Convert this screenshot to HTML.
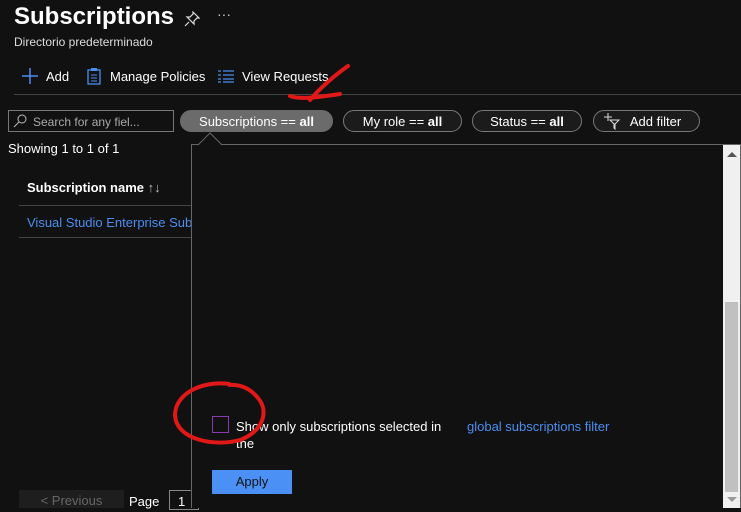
<!DOCTYPE html>
<html><head><style>
body{margin:0;width:741px;height:508px;background:#111;overflow:hidden;position:relative;font-family:"Liberation Sans",sans-serif;color:#fff}
.a{position:absolute;white-space:nowrap}
.pill{position:absolute;height:22px;border:1px solid #777;border-radius:12px;font-size:13px;line-height:22px;text-align:center;box-sizing:border-box;background:#1b1b1b}
</style></head><body>
<div class="a" style="left:14px;top:3px;font-size:24px;font-weight:bold">Subscriptions</div>
<svg class="a" style="left:184px;top:11px" width="16" height="16" viewBox="0 0 16 16"><path d="M9 1l6 6-2 0-3 3 0 3-7-7 3 0 3-3z M5 11l-4 4" stroke="#ddd" fill="none" stroke-width="1.2"/></svg>
<div class="a" style="left:217px;top:6px;font-size:14px;color:#ccc">···</div>
<div class="a" style="left:14px;top:35px;font-size:12px;color:#ddd">Directorio predeterminado</div>
<svg class="a" style="left:22px;top:68px" width="16" height="16"><path d="M8 0v16M0 8h16" stroke="#4b8ef0" stroke-width="1.5"/></svg>
<div class="a" style="left:46px;top:69px;font-size:13px">Add</div>
<svg class="a" style="left:87px;top:67px" width="14" height="18"><rect x="1" y="3" width="12" height="14" fill="none" stroke="#4b8ef0" stroke-width="1.3"/><rect x="4" y="1" width="6" height="3" fill="#4b8ef0"/><path d="M4 8h6M4 11h6M4 14h6" stroke="#4b8ef0"/></svg>
<div class="a" style="left:110px;top:69px;font-size:13px">Manage Policies</div>
<svg class="a" style="left:218px;top:69px" width="16" height="14"><path d="M5 2h11M5 6h11M5 10h11M5 13h11M0 2h3M0 6h3M0 10h3M0 13h3" stroke="#4b8ef0" stroke-width="1.2"/></svg>
<div class="a" style="left:242px;top:69px;font-size:13px">View Requests</div>
<div class="a" style="left:14px;top:94px;width:727px;height:1px;background:#444"></div>
<div class="a" style="left:8px;top:110px;width:166px;height:22px;border:1px solid #777;box-sizing:border-box"></div>
<svg class="a" style="left:13px;top:114px" width="14" height="14"><circle cx="9" cy="5" r="4" stroke="#bbb" fill="none"/><path d="M6 8l-5 5" stroke="#bbb"/></svg>
<div class="a" style="left:33px;top:115px;font-size:12px;color:#aaa">Search for any fiel...</div>
<div class="pill" style="left:180px;top:110px;width:153px;background:#6b6b6b;border-color:#6b6b6b">Subscriptions == <b>all</b></div>
<div class="pill" style="left:343px;top:110px;width:119px">My role == <b>all</b></div>
<div class="pill" style="left:472px;top:110px;width:110px">Status == <b>all</b></div>
<div class="pill" style="left:593px;top:110px;width:107px;padding-left:18px">Add filter</div>
<svg class="a" style="left:603px;top:112px" width="20" height="18"><path d="M1 5h8M5 1v8M7 8h9l-4 4v5l-1-1v-4z" stroke="#ddd" fill="none"/></svg>
<div class="a" style="left:8px;top:141px;font-size:13px">Showing 1 to 1 of 1</div>
<div class="a" style="left:27px;top:180px;font-size:13px;font-weight:bold">Subscription name <span style="font-weight:normal;color:#bbb">↑↓</span></div>
<div class="a" style="left:19px;top:205px;width:175px;height:1px;background:#444"></div>
<div class="a" style="left:27px;top:215px;font-size:13px;color:#4b8ef0">Visual Studio Enterprise Subs</div>
<div class="a" style="left:19px;top:237px;width:175px;height:1px;background:#444"></div>
<div class="a" style="left:19px;top:490px;width:105px;height:18px;background:#1e1e1e;color:#666;font-size:13px;text-align:center;line-height:22px">&lt; Previous</div>
<div class="a" style="left:129px;top:494px;font-size:13px">Page</div>
<div class="a" style="left:169px;top:490px;width:30px;height:20px;border:1px solid #888;font-size:13px;padding:3px 0 0 8px;box-sizing:border-box">1</div>
<!-- panel -->
<div class="a" style="left:191px;top:144px;width:550px;height:364px;background:#111;border-left:1px solid #666;border-top:1px solid #666;box-sizing:border-box"></div>
<svg class="a" style="left:198px;top:132px" width="24" height="14"><path d="M0 13l12-12 12 12" fill="#111" stroke="#666"/></svg>
<div class="a" style="left:723px;top:145px;width:17px;height:363px;background:#f0f0f0"></div>
<div class="a" style="left:725px;top:302px;width:13px;height:190px;background:#c0c0c0"></div>
<div class="a" style="left:740px;top:145px;width:1px;height:363px;background:#666"></div>
<svg class="a" style="left:727px;top:151px" width="10" height="6"><path d="M0 6l5-5 5 5z" fill="#555"/></svg>
<svg class="a" style="left:727px;top:497px" width="10" height="6"><path d="M0 0l5 5 5-5z" fill="#999"/></svg>
<div class="a" style="left:212px;top:416px;width:17px;height:17px;border:1px solid #8a3bb0;box-sizing:border-box"></div>
<div class="a" style="left:236px;top:419px;font-size:13px">Show only subscriptions selected in</div>
<div class="a" style="left:467px;top:419px;font-size:13px;color:#4b8ef0">global subscriptions filter</div>
<div class="a" style="left:236px;top:436px;font-size:13px">the</div>
<div class="a" style="left:212px;top:470px;width:80px;height:24px;background:#4a90f5;color:#111;font-size:13px;text-align:center;line-height:24px">Apply</div>
<!-- red annotations -->
<svg class="a" style="left:0;top:0" width="741" height="508">
<path d="M348 66C335 75 320 88 310 100M290 96C300 100 320 97 340 94" stroke="#e01818" stroke-width="4" fill="none" stroke-linecap="round"/>
<path d="M230 384C200 380 175 395 175 415C176 440 215 447 240 440C262 432 270 412 258 398C250 388 240 384 228 385" stroke="#e01818" stroke-width="4" fill="none"/>
</svg>
</body></html>
